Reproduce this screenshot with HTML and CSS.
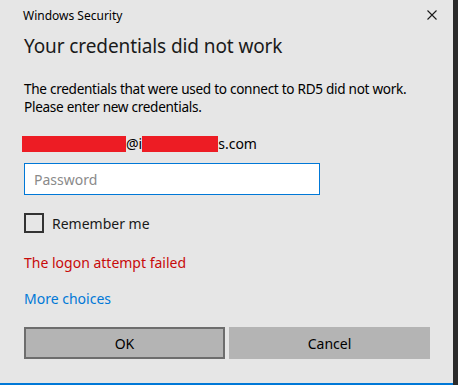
FILE: index.html
```html
<!DOCTYPE html>
<html>
<head>
  <title>Windows Security</title>
  <link rel="stylesheet" href="styles.css">
</head>
<body>
  <div class="dialog">
    <div class="titlebar">
      <span class="app-name">Windows Security</span>
      <svg class="close" width="10" height="10" viewBox="0 0 10 10">
        <path d="M0.5 0.5 L9.5 9.5 M9.5 0.5 L0.5 9.5" stroke="#1a1a1a" stroke-width="1.1" fill="none"/>
      </svg>
    </div>

    <h1 class="heading">Your credentials did not work</h1>

    <p class="message">The credentials that were used to connect to RD5 did not work.<br>Please enter new credentials.</p>

    <div class="user"><span class="redact r1"></span>@i<span class="redact r2"></span>s.com</div>

    <input class="password" type="password" placeholder="Password">

    <label class="remember">
      <span class="box"></span>
      Remember me
    </label>

    <div class="error">The logon attempt failed</div>

    <a class="more" href="#">More choices</a>

    <div class="actions">
      <button class="btn default">OK</button>
      <button class="btn">Cancel</button>
    </div>
  </div>
</body>
</html>
```

FILE: styles.css
```css
body {
  margin: 0;
  background: #2b2b2b;
  font-family: "Noto Sans", "Open Sans", sans-serif;
  color: #000;
}
.dialog {
  width: 453px;
  height: 385px;
  box-sizing: border-box;
  background: #e6e6e6;
  border-bottom: 2px solid #0078d7;
  padding-left: 24px;
}
.titlebar {
  display: flex;
  justify-content: space-between;
  align-items: center;
  height: 30px;
  padding-right: 16px;
}
.app-name {
  font-size: 12px;
  margin-left: -1px;
}
.heading {
  margin: 2px 0 0;
  font-size: 19px;
  font-weight: normal;
  line-height: 28px;
  color: #1a1a1a;
  letter-spacing: -0.1px;
}
.message {
  margin: 20px 0 0;
  font-size: 13.6px;
  line-height: 18px;
  letter-spacing: -0.3px;
}
.user {
  margin-top: 18px;
  font-size: 14px;
  line-height: 20px;
  height: 20px;
  display: flex;
  align-items: center;
}
.redact {
  display: inline-block;
  height: 16px;
  background: #ed1c24;
}
.r1 {
  width: 104px;
  margin-left: -2px;
}
.r2 {
  width: 76px;
}
.password {
  display: block;
  margin-top: 9px;
  width: 296px;
  height: 32px;
  box-sizing: border-box;
  border: 1px solid #0078d7;
  background: #fff;
  padding: 0 9px;
  font-family: inherit;
  font-size: 14px;
  outline: none;
}
.password::placeholder {
  color: #8a8a8a;
}
.remember {
  display: flex;
  align-items: center;
  gap: 8px;
  margin-top: 18px;
  font-size: 14px;
  color: #1a1a1a;
}
.box {
  width: 20px;
  height: 20px;
  box-sizing: border-box;
  border: 2px solid #333;
}
.error {
  margin-top: 21px;
  font-size: 14px;
  line-height: 18px;
  color: #c80a0a;
}
.more {
  display: block;
  margin-top: 18px;
  font-size: 14px;
  line-height: 18px;
  color: #0078d7;
  text-decoration: none;
}
.actions {
  display: flex;
  gap: 4px;
  margin-top: 19px;
}
.btn {
  width: 201px;
  height: 32px;
  border: none;
  background: #b4b4b4;
  font-family: inherit;
  font-size: 14px;
  color: #000;
  padding: 0;
}
.btn.default {
  border: 2px solid #6d6d6d;
}
```
